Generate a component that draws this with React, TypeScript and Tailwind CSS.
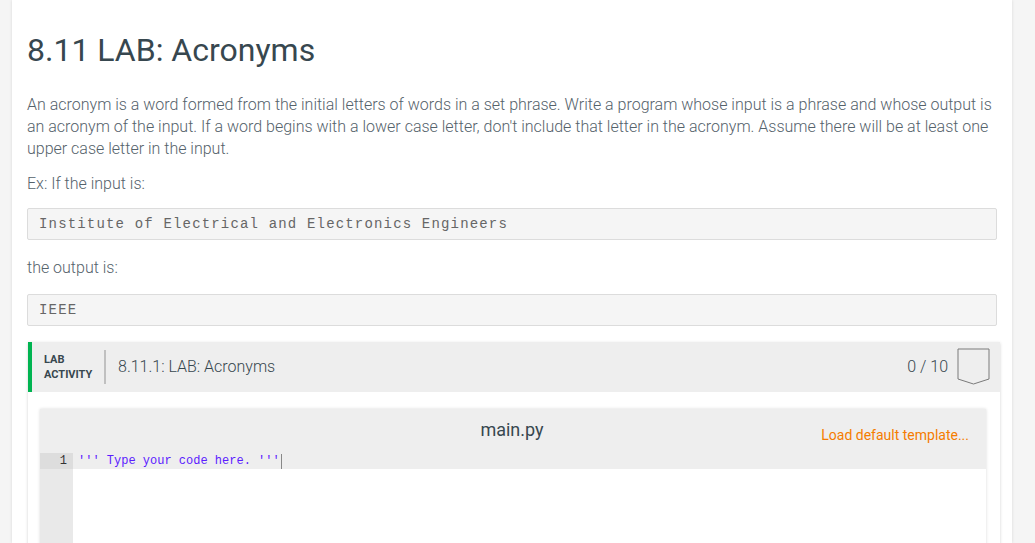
import React from "react";

const mono = { fontFamily: "'Liberation Mono', 'Courier New', monospace" };

export default function App() {
  return (
    <div className="h-[543px] w-[1035px] overflow-hidden bg-[#f5f5f5] flex" style={{ fontFamily: "Roboto, 'Liberation Sans', sans-serif" }}>
      <div className="ml-[12px] w-[1000px] bg-white shadow-[0_0_3px_rgba(0,0,0,0.12)] pl-[15px] pr-[15px]">
        <h1 className="mt-[30px] ml-[0px] text-[32px] leading-[40px] text-[#37474f] font-normal">8.11 LAB: Acronyms</h1>
        <p className="mt-[24px] text-[16px] leading-[22px] text-[#55626b] font-light">
          An acronym is a word formed from the initial letters of words in a set phrase. Write a program whose input is a phrase and whose output is an acronym of the input. If a word begins with a lower case letter, don't include that letter in the acronym. Assume there will be at least one upper case letter in the input.
        </p>
        <p className="mt-[13px] text-[16px] leading-[22px] text-[#55626b] font-light">Ex: If the input is:</p>
        <div className="mt-[13px] h-[32px] bg-[#f5f5f5] border border-[#dcdcdc] rounded-[2px] px-[11px] flex items-center text-[14px] tracking-[1.17px] text-[#666]" style={mono}>
          Institute of Electrical and Electronics Engineers
        </div>
        <p className="mt-[17px] text-[16px] leading-[22px] text-[#55626b] font-light">the output is:</p>
        <div className="mt-[15px] h-[32px] bg-[#f5f5f5] border border-[#dcdcdc] rounded-[2px] px-[11px] flex items-center text-[14px] tracking-[1.17px] text-[#666]" style={mono}>
          IEEE
        </div>
        <div className="mt-[16px] ml-[1px] mr-[-3px] shadow-[0_1px_3px_rgba(0,0,0,0.18)] bg-white">
          <div className="h-[50px] bg-[#eeeeee] border-l-[4px] border-[#00b451] flex items-center pl-[12px] pr-[10px]">
            <div className="text-[11px] leading-[15px] font-bold text-[#37474f] w-[60px]">
              LAB<br />ACTIVITY
            </div>
            <div className="w-[2px] h-[34px] bg-[#c0c0c0] mr-[12px]" />
            <div className="text-[16px] text-[#37474f] font-light">8.11.1: LAB: Acronyms</div>
            <div className="ml-auto flex items-center gap-[9px]">
              <span className="text-[16px] text-[#37474f] font-light">0 / 10</span>
              <svg width="33" height="38" viewBox="0 0 33 38">
                <path d="M1 1 H32 V31 L16.5 36 L1 31 Z" fill="#eeeeee" stroke="#7a7a7a" strokeWidth="1" />
              </svg>
            </div>
          </div>
          <div className="pt-[17px] pl-[12px] pr-[14px] h-[200px]">
            <div className="shadow-[0_0_3px_rgba(0,0,0,0.15)] h-full bg-white">
              <div className="h-[44px] bg-[#eeeeee] relative flex items-center justify-center">
                <span className="text-[18px] text-[#37474f] mt-[-4px] ml-[-2px]">main.py</span>
                <span className="absolute right-[17px] top-[16px] text-[14px] font-normal text-[#f57c00]">Load default template...</span>
              </div>
              <div className="flex h-full">
                <div className="w-[33px] bg-[#e9e9e9] flex flex-col">
                  <div className="h-[16px] bg-[#dddddd] text-right pr-[6px] text-[12px] leading-[16px] text-[#333]" style={mono}>1</div>
                </div>
                <div className="flex-1">
                  <div className="h-[16px] bg-[#eeeeee] pl-[5px] text-[12px] leading-[16px] text-[#5c1cff] flex items-center" style={mono}>
                    <span className="whitespace-pre">''' Type your code here. '''</span>
                    <span className="w-[1px] h-[15px] bg-[#888] ml-[1px]" />
                  </div>
                </div>
              </div>
            </div>
          </div>
        </div>
      </div>
    </div>
  );
}
